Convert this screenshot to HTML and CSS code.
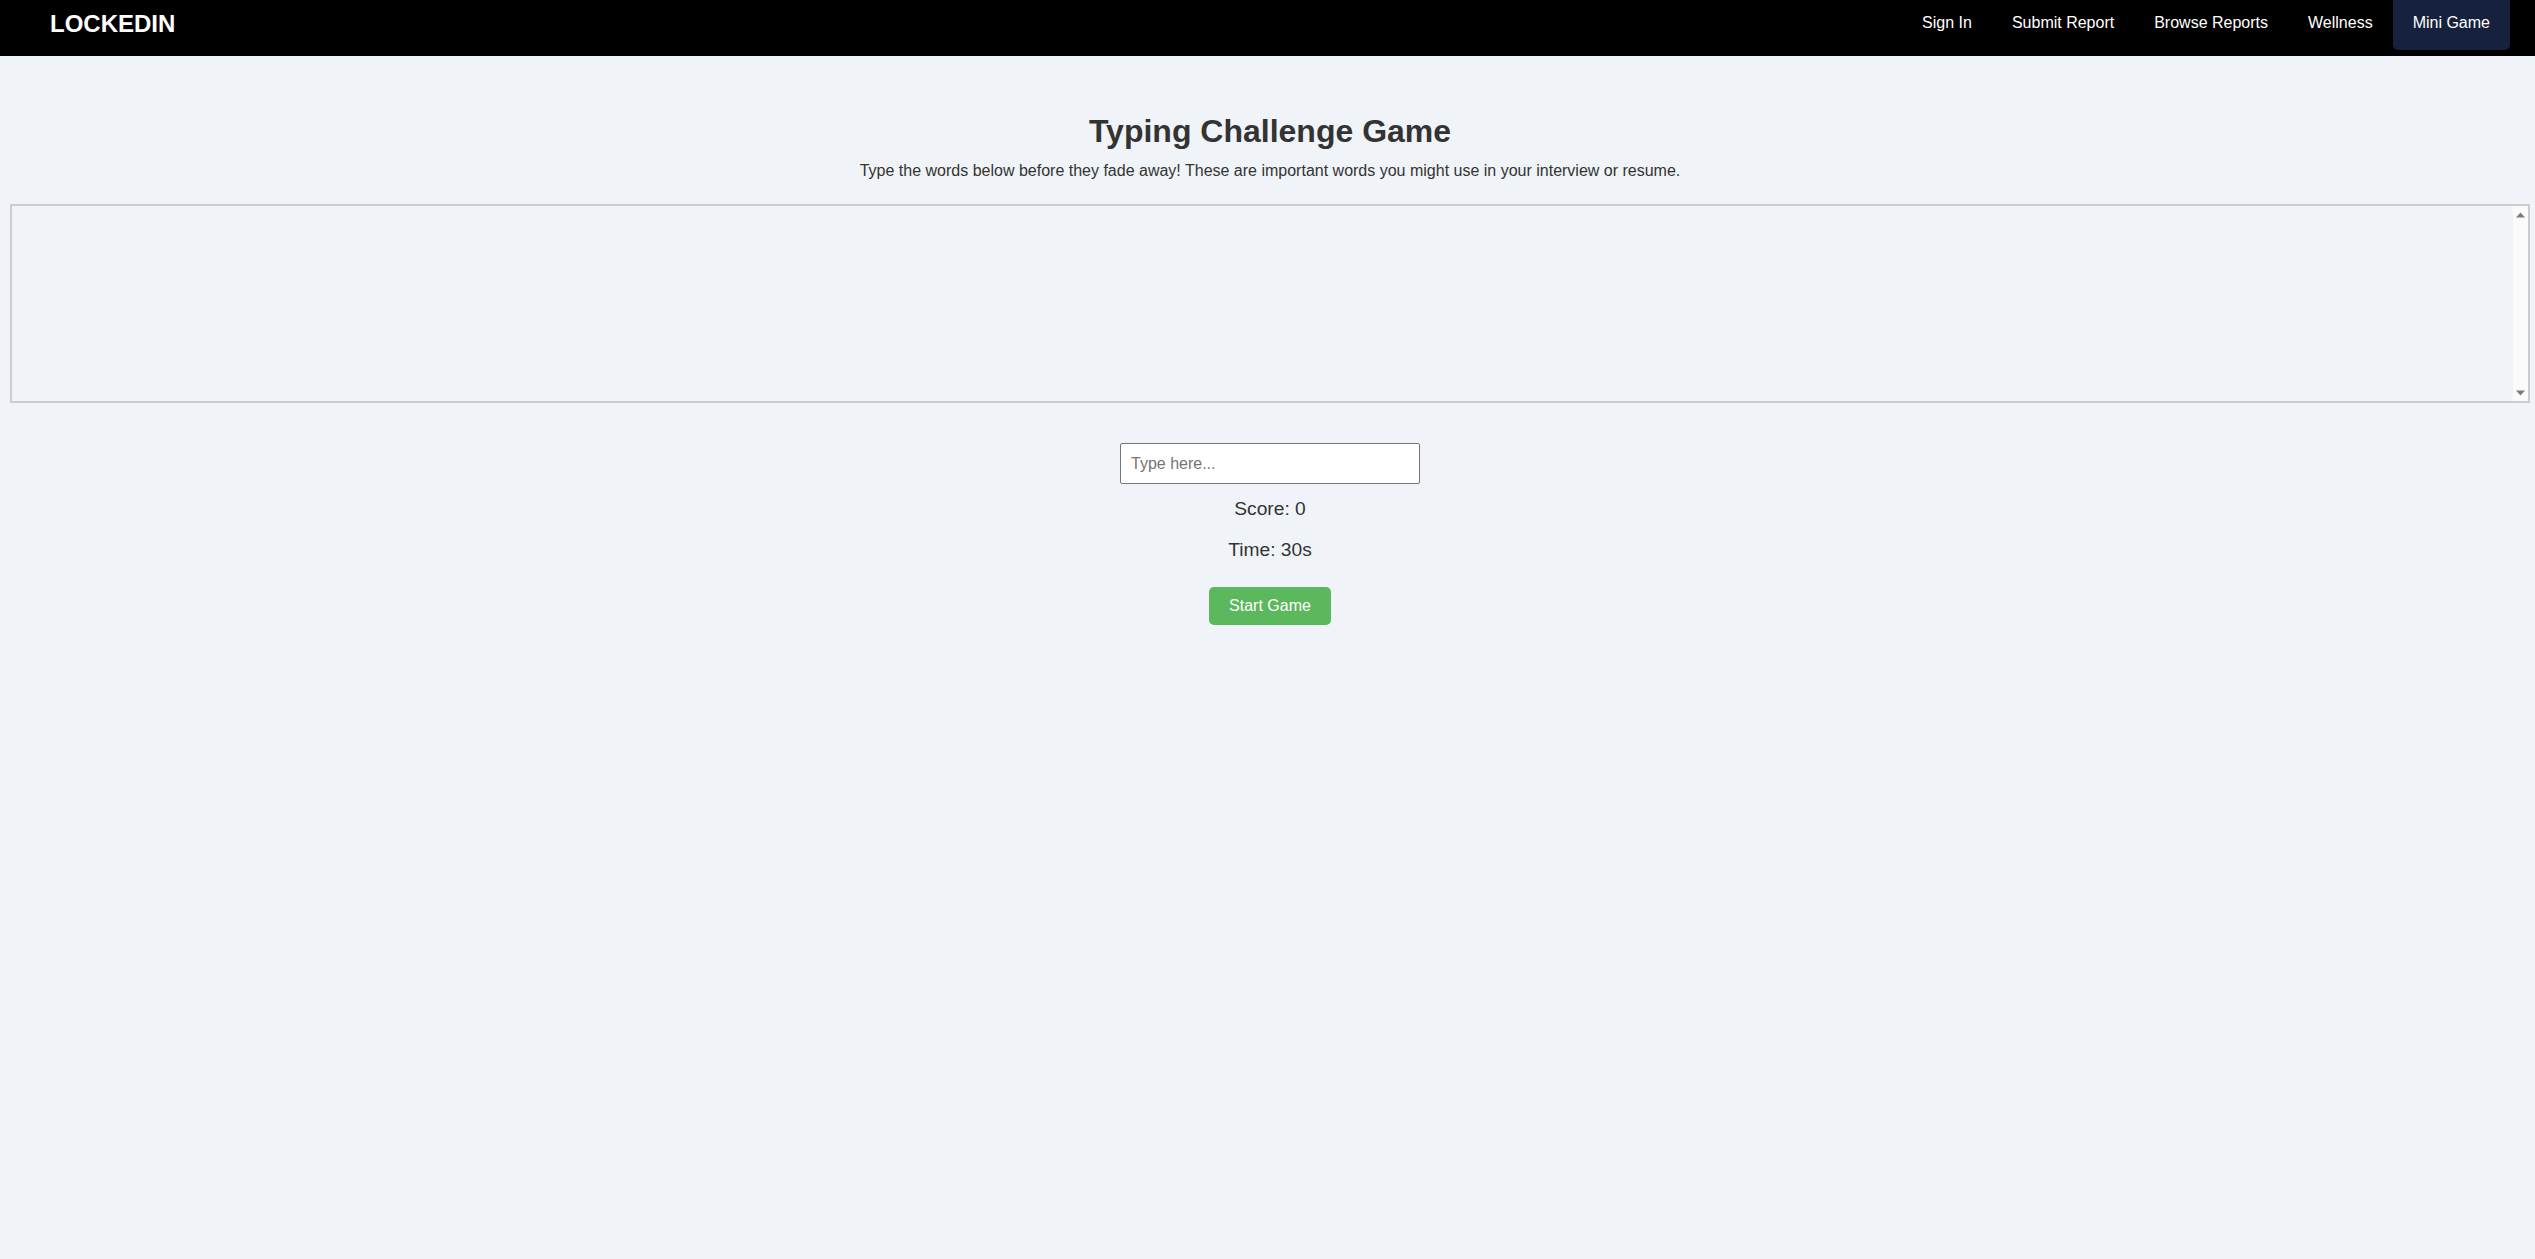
FILE: index.html
```html
<!DOCTYPE html>
<html lang="en">
<head>
  <meta charset="UTF-8">
  <title>Mini Game - LockedIn</title>
  <meta name="viewport" content="width=device-width, initial-scale=1.0">
  <link rel="stylesheet" href="styles.css">
</head>
<body>

  <!-- Top navigation -->
  <nav class="navbar">
    <div class="logo">LOCKEDIN</div>
    <ul class="nav-links">
      <li><a href="#">Sign In</a></li>
      <li><a href="#">Submit Report</a></li>
      <li><a href="#">Browse Reports</a></li>
      <li><a href="#">Wellness</a></li>
      <li><a href="#" class="active">Mini Game</a></li>
    </ul>
  </nav>

  <main class="game-container">
    <h1>Typing Challenge Game</h1>
    <p class="intro">Type the words below before they fade away! These are important words you might use in your interview or resume.</p>

    <div class="game-area">
      <div id="wordField" class="word-field"></div>
      <!-- empty scroll track, like the browser draws it -->
      <div class="scroll-track">
        <span class="scroll-btn">
          <svg width="9" height="6" viewBox="0 0 9 6"><path d="M4.5 0.5L9 5.5H0z" fill="#7d7d7d"/></svg>
        </span>
        <span class="scroll-btn">
          <svg width="9" height="6" viewBox="0 0 9 6"><path d="M0 0.5H9L4.5 5.5z" fill="#7d7d7d"/></svg>
        </span>
      </div>
    </div>

    <div class="controls">
      <input type="text" id="wordInput" class="word-input" placeholder="Type here...">
      <p class="stat score">Score: <span id="score">0</span></p>
      <p class="stat time">Time: <span id="timer">30</span>s</p>
      <button type="button" id="startBtn" class="start-btn">Start Game</button>
    </div>
  </main>

</body>
</html>
```

FILE: styles.css
```css
body {
  font-family: 'Liberation Sans', Arial, sans-serif;
  background: #f0f4f8;
  color: #333;
  margin: 0;
}

/* Barra de navegação */
.navbar {
  display: flex;
  justify-content: space-between;
  align-items: flex-start;
  height: 56px;
  box-sizing: border-box;
  padding: 0 25px 0 50px;
  background-color: #000;
}

.logo {
  margin-top: 10px;
  color: #fff;
  font-size: 24px;
  font-weight: bold;
}

.nav-links {
  display: flex;
  list-style: none;
  margin: 0;
  padding: 0;
}

.nav-links a {
  display: block;
  padding: 14px 20px 18px;
  color: #fff;
  font-size: 16px;
  text-decoration: none;
}

.nav-links a.active {
  background-color: #16213e;
  border-radius: 0 0 5px 5px;
}

/* Área do jogo */
.game-container {
  padding: 57px 5px 40px 10px;
  text-align: center;
}

h1 {
  margin: 0 0 12px;
  font-size: 32px;
  color: #333;
}

.intro {
  margin: 0 0 24px;
  font-size: 16px;
}

.game-area {
  display: flex;
  height: 199px;
  box-sizing: border-box;
  border: 2px solid #ccc;
  text-align: left;
}

.word-field {
  flex: 1;
  overflow-y: auto;
}

.scroll-track {
  display: flex;
  flex-direction: column;
  justify-content: space-between;
  width: 15px;
  background: #fafafa;
}

.scroll-btn {
  display: flex;
  align-items: center;
  justify-content: center;
  height: 17px;
}

.controls {
  display: flex;
  flex-direction: column;
  align-items: center;
}

.word-input {
  width: 300px;
  height: 41px;
  box-sizing: border-box;
  margin-top: 40px;
  padding: 10px;
  border: 1px solid #767676;
  border-radius: 2px;
  background: #fff;
  font-family: inherit;
  font-size: 16px;
}

.word-input::placeholder {
  color: #757575;
}

.stat {
  margin: 0;
  font-size: 19.2px;
}

.score {
  margin-top: 14px;
}

.time {
  margin-top: 19px;
}

.start-btn {
  margin-top: 26px;
  padding: 10px 20px;
  background: #5cb85c;
  border: none;
  border-radius: 5px;
  color: #fff;
  font-family: inherit;
  font-size: 16px;
  cursor: pointer;
}

.start-btn:hover {
  background: #4cae4c;
}
```
